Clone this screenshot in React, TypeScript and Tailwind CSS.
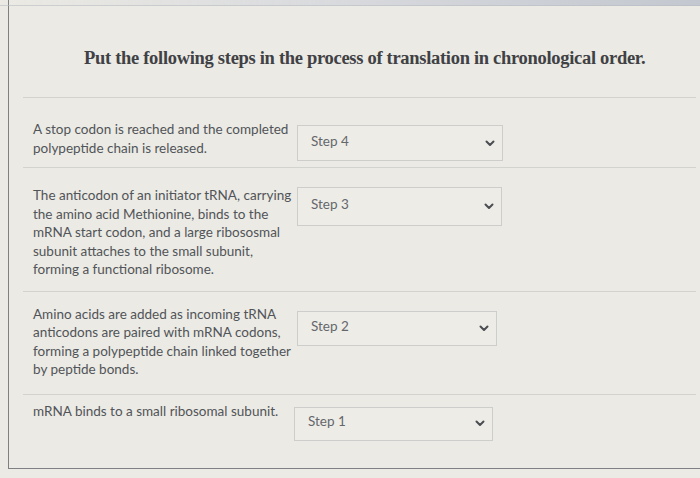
import React from "react";

const rows = [
  {
    text: "A stop codon is reached and the completed polypeptide chain is released.",
    step: "Step 4",
    pt: "pt-[22px]",
    pb: "pb-[6px]",
    mt: "mt-[5px]",
    sel: "w-[206px] h-[36px]",
  },
  {
    text: "The anticodon of an initiator tRNA, carrying the amino acid Methionine, binds to the mRNA start codon, and a large ribososmal subunit attaches to the small subunit, forming a functional ribosome.",
    step: "Step 3",
    pt: "pt-[18px]",
    pb: "pb-[12px]",
    mt: "mt-[1px]",
    sel: "w-[205px] h-[39px]",
  },
  {
    text: "Amino acids are added as incoming tRNA anticodons are paired with mRNA codons, forming a polypeptide chain linked together by peptide bonds.",
    step: "Step 2",
    pt: "pt-[13px]",
    pb: "pb-[15px]",
    mt: "mt-[6px]",
    sel: "w-[200px] h-[35px]",
  },
  {
    text: "mRNA binds to a small ribosomal subunit.",
    step: "Step 1",
    pt: "pt-[7px]",
    pb: "pb-[6px]",
    mt: "mt-[5px]",
    sel: "w-[199px] h-[34px] -ml-[3px]",
  },
];

function Chevron() {
  return (
    <svg width="10" height="7" viewBox="0 0 10 7" className="shrink-0">
      <path d="M1.5 1.5 L5 5 L8.5 1.5" fill="none" stroke="#4a4d52" strokeWidth="2" strokeLinecap="round" strokeLinejoin="round" />
    </svg>
  );
}

export default function App() {
  return (
    <div className="relative w-[700px] h-[478px] overflow-hidden bg-[#ebeae4]" style={{ fontFamily: "Lato, 'Noto Sans', sans-serif" }}>
      <div className="absolute top-0 left-0 w-full h-[6px] bg-gradient-to-r from-transparent via-[#d7d9dd] to-[#c3c7cf] border-b border-[#b9bcc2]/60" />
      <div className="ml-[8px] h-[469px] border-l border-b border-[#7f8083] flex flex-col">
        <div className="pt-[46px] pb-[27px] pl-[75px]">
          <h1
            className="text-[#3f4145] font-bold text-[18.5px] leading-[24px] tracking-[-0.3px]"
            style={{ fontFamily: "'Liberation Serif', 'Times New Roman', serif" }}
          >
            Put the following steps in the process of translation in chronological order.
          </h1>
        </div>
        {rows.map((r, i) => (
          <div key={i} className="flex flex-col">
            <div className="ml-[14px] mr-[4px] h-px bg-[#d2d2cf]" />
            <div className={`flex items-start pl-[24px] ${r.pt} ${r.pb}`}>
              <p className="w-[264px] pr-[4px] text-[13.5px] leading-[18.5px] text-[#515458]">
                {r.text}
              </p>
              <div
                className={`${r.mt} ${r.sel} flex items-center justify-between pl-[13px] pr-[7px] border border-[#cdcecc] bg-[#edece7] text-[13.5px] text-[#65676b]`}
              >
                <span className="-mt-[4px]">{r.step}</span>
                <Chevron />
              </div>
            </div>
          </div>
        ))}
      </div>
    </div>
  );
}
